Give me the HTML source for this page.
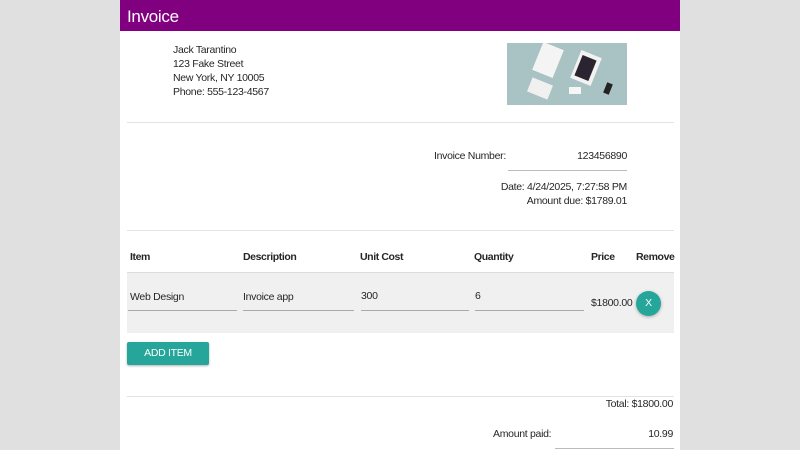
<!DOCTYPE html>
<html><head><meta charset="utf-8"><style>
*{margin:0;padding:0;box-sizing:border-box}
body{width:800px;height:450px;background:#e0e0e0;font-family:"Liberation Sans",sans-serif;color:#262626;font-size:10.5px;letter-spacing:-0.3px;position:relative;overflow:hidden}
.card{position:absolute;left:120px;top:0;width:560px;height:450px;background:#fff}
.hdr{position:absolute;left:0;top:0;width:560px;height:31px;background:#800080;color:#fff;font-size:17px;letter-spacing:-0.3px;padding:7px 0 0 7px}
.a{position:absolute;white-space:nowrap}
.hr{position:absolute;height:1px;background:#e3e3e3}
.line{position:absolute;height:1px;background:#aaa}
b{font-weight:bold;letter-spacing:-0.4px}
</style></head><body>
<div class="card">
<div class="hdr">Invoice</div>
<div class="a" style="left:53px;top:43px;line-height:14px">Jack Tarantino<br>123 Fake Street<br>New York, NY 10005<br>Phone: 555-123-4567</div>
<div class="a" style="left:387px;top:43px;width:120px;height:62px;background:#a9c2c3;overflow:hidden">
 <div class="a" style="left:30px;top:2px;width:22px;height:30px;background:#f4f4f4;transform:rotate(22deg)"></div>
 <div class="a" style="left:68px;top:10px;width:22px;height:30px;background:#f2f2f2;transform:rotate(22deg)"></div>
 <div class="a" style="left:71px;top:14px;width:15px;height:22px;background:#2a2430;transform:rotate(22deg)"></div>
 <div class="a" style="left:22px;top:38px;width:22px;height:15px;background:#f0f0f0;transform:rotate(22deg)"></div>
 <div class="a" style="left:98px;top:40px;width:6px;height:11px;background:#222;transform:rotate(22deg)"></div>
 <div class="a" style="left:62px;top:44px;width:12px;height:7px;background:#f6f6f6"></div>
</div>
<div class="hr" style="left:7px;top:122px;width:547px"></div>
<div class="a" style="left:314px;top:150px">Invoice Number:</div>
<div class="a" style="right:53px;top:150px">123456890</div>
<div class="line" style="left:388px;top:170px;width:119px;background:#bbb"></div>
<div class="a" style="right:53px;top:180px;text-align:right;line-height:14px">Date: 4/24/2025, 7:27:58 PM<br>Amount due: $1789.01</div>
<div class="hr" style="left:7px;top:230px;width:547px"></div>
<div class="a" style="left:10px;top:251px"><b>Item</b></div>
<div class="a" style="left:123px;top:251px"><b>Description</b></div>
<div class="a" style="left:240px;top:251px"><b>Unit Cost</b></div>
<div class="a" style="left:354px;top:251px"><b>Quantity</b></div>
<div class="a" style="left:471px;top:251px"><b>Price</b></div>
<div class="a" style="left:516px;top:251px"><b>Remove</b></div>
<div class="a" style="left:7px;top:272px;width:547px;height:61px;background:#f0f0f0;border-top:1px solid #ddd"></div>
<div class="a" style="left:10px;top:291px">Web Design</div>
<div class="a" style="left:123px;top:291px">Invoice app</div>
<div class="a" style="left:241px;top:290px">300</div>
<div class="a" style="left:355px;top:290px">6</div>
<div class="line" style="left:8px;top:310px;width:109px"></div>
<div class="line" style="left:123px;top:310px;width:111px"></div>
<div class="line" style="left:241px;top:310px;width:108px"></div>
<div class="line" style="left:355px;top:310px;width:109px"></div>
<div class="a" style="left:471px;top:297px">$1800.00</div>
<div class="a" style="left:516px;top:291px;width:25px;height:25px;border-radius:50%;background:#26a69a;color:#fff;text-align:center;line-height:25px;box-shadow:0 1px 3px rgba(0,0,0,.3)">X</div>
<div class="a" style="left:7px;top:342px;width:82px;height:23px;background:#26a69a;color:#fff;text-align:center;line-height:23px;border-radius:2px;box-shadow:0 1px 2px rgba(0,0,0,.3)">ADD ITEM</div>
<div class="hr" style="left:7px;top:396px;width:547px"></div>
<div class="a" style="right:7px;top:398px">Total: $1800.00</div>
<div class="a" style="left:373px;top:428px">Amount paid:</div>
<div class="a" style="right:7px;top:428px">10.99</div>
<div class="line" style="left:435px;top:448px;width:119px;background:#bbb"></div>
</div>
</body></html>
